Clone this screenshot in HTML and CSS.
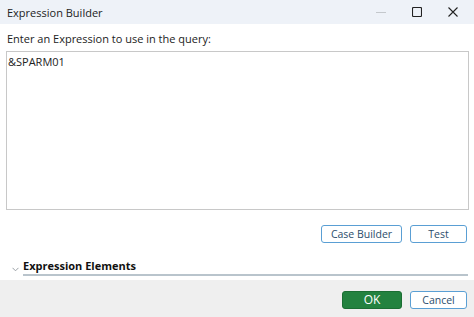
FILE: index.html
```html
<!DOCTYPE html>
<html lang="en">
<head>
    <meta charset="UTF-8" />
    <title>Expression Builder</title>
    <link rel="stylesheet" href="styles.css">
</head>
<body>

<div class="window">

    <!-- Title bar -->
    <div class="titlebar">
        <span class="title">Expression Builder</span>
        <div class="controls">
            <span class="ctl ctl-min">
                <svg width="10" height="10" viewBox="0 0 10 10"><path d="M0 5.5h10" stroke="#c4c8cc" stroke-width="1"/></svg>
            </span>
            <span class="ctl">
                <svg width="10" height="10" viewBox="0 0 10 10"><rect x="0.5" y="0.5" width="9" height="9" rx="1" fill="none" stroke="#222" stroke-width="1.1"/></svg>
            </span>
            <span class="ctl">
                <svg width="10" height="10" viewBox="0 0 10 10"><path d="M0.5 0.5L9.5 9.5M9.5 0.5L0.5 9.5" stroke="#222" stroke-width="1.1"/></svg>
            </span>
        </div>
    </div>

    <div class="content">
        <label class="label" for="expr">Enter an Expression to use in the query:</label>
        <textarea id="expr" class="expr">&amp;SPARM01</textarea>

        <div class="actions">
            <button class="btn btn-wide">Case Builder</button>
            <button class="btn btn-small">Test</button>
        </div>

        <div class="section">
            <svg class="chev" width="7" height="5" viewBox="0 0 7 5"><path d="M0.5 0.8L3.5 3.8L6.5 0.8" fill="none" stroke="#9aa0a6" stroke-width="1"/></svg>
            <span class="section-title">Expression Elements</span>
        </div>
    </div>

    <!-- Footer -->
    <div class="footer">
        <button class="btn btn-ok">OK</button>
        <button class="btn btn-small">Cancel</button>
    </div>

</div>

</body>
</html>
```

FILE: styles.css
```css
body {
    margin: 0;
    padding: 0;
    font-family: "Open Sans", "Noto Sans", sans-serif;
    background: #fff;
    color: #222;
}

.window {
    width: 474px;
    height: 317px;
    display: flex;
    flex-direction: column;
    overflow: hidden;
}

.titlebar {
    height: 24px;
    background: #eef2f8;
    display: flex;
    align-items: center;
    justify-content: space-between;
    padding-left: 7px;
    font-size: 11px;
    color: #222;
}

.controls {
    display: flex;
    height: 100%;
    padding-right: 3px;
}

.ctl {
    width: 36px;
    display: flex;
    align-items: center;
    justify-content: center;
}

.content {
    flex: 1;
    padding: 7px 6px 0 6px;
}

.label {
    display: block;
    font-size: 11px;
    height: 16px;
    line-height: 16px;
    margin-left: 1px;
}

.expr {
    display: block;
    box-sizing: border-box;
    width: 463px;
    height: 159px;
    margin-top: 4px;
    border: 1px solid #c8c8c8;
    padding: 2px 1px;
    font-family: inherit;
    font-size: 11px;
    color: #222;
    resize: none;
    outline: none;
}

.actions {
    display: flex;
    justify-content: flex-end;
    gap: 8px;
    margin-top: 15px;
    padding-right: 1px;
}

.btn {
    box-sizing: border-box;
    height: 18px;
    padding: 0;
    border: 1px solid #5a9fd4;
    border-radius: 3px;
    background: #fff;
    font-family: inherit;
    font-size: 10.5px;
    color: #2b4d6b;
    line-height: 16px;
    white-space: nowrap;
    text-align: center;
}

.btn-wide {
    width: 81px;
}

.btn-small {
    width: 57px;
}

.section {
    display: flex;
    align-items: center;
    margin-top: 16px;
    margin-left: 6px;
    height: 16px;
}

.chev {
    margin-right: 4px;
    margin-top: 4px;
}

.section-title {
    flex: 1;
    font-size: 11px;
    font-weight: 700;
    color: #111;
    border-bottom: 2px solid #b9c4cc;
    line-height: 14px;
    padding-bottom: 1px;
}

.footer {
    height: 37px;
    background: #efefef;
    display: flex;
    justify-content: flex-end;
    align-items: flex-start;
    gap: 8px;
    padding: 11px 7px 0 0;
    box-sizing: border-box;
}

.btn-ok {
    width: 60px;
    background: #23823f;
    border-color: #1b6e33;
    color: #fff;
    font-size: 12px;
}
```
